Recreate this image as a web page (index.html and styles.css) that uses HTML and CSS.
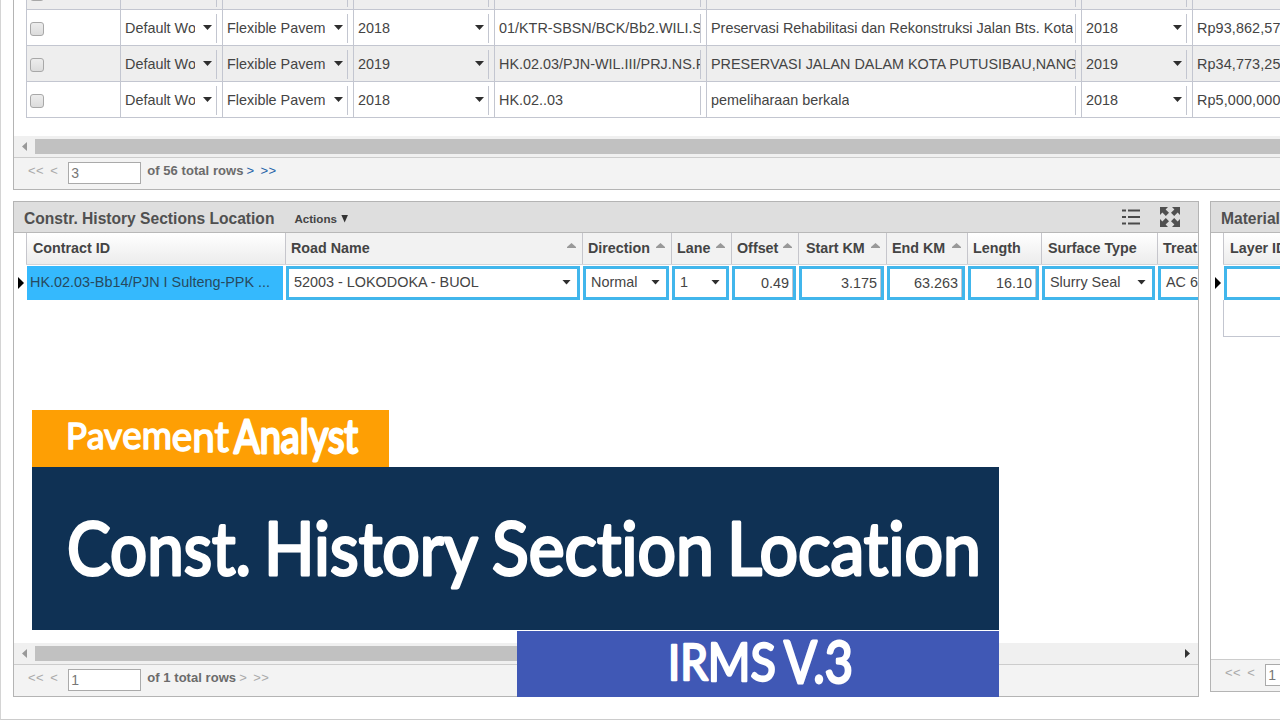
FILE: index.html
```html
<!DOCTYPE html>
<html>
<head>
<meta charset="UTF-8">
<title>Pavement Analyst</title>
<link rel="stylesheet" href="styles.css">
</head>
<body>
<div class="page">

<!-- contracts -->
<div class="panel contracts">
  <div class="grid-body">
    <div class="row alt first">
      <div class="cell"><span class="check"></span></div>
      <div class="cell"><div class="field"></div></div>
      <div class="cell"><div class="field"></div></div>
      <div class="cell"><div class="field"></div></div>
      <div class="cell"><div class="field"></div></div>
      <div class="cell"><div class="field"></div></div>
      <div class="cell"><div class="field"></div></div>
      <div class="cell"></div>
    </div>
    <div class="row">
      <div class="cell"><span class="check"></span></div>
      <div class="cell"><div class="field"><span>Default Wo</span><i class="arrow"></i></div></div>
      <div class="cell"><div class="field"><span>Flexible Pavem</span><i class="arrow"></i></div></div>
      <div class="cell"><div class="field"><span>2018</span><i class="arrow"></i></div></div>
      <div class="cell"><div class="field"><span>01/KTR-SBSN/BCK/Bb2.WILI.S</span></div></div>
      <div class="cell"><div class="field"><span>Preservasi Rehabilitasi dan Rekonstruksi Jalan Bts. Kota</span></div></div>
      <div class="cell"><div class="field"><span>2018</span><i class="arrow"></i></div></div>
      <div class="cell"><div class="field"><span>Rp93,862,570</span></div></div>
    </div>
    <div class="row alt">
      <div class="cell"><span class="check"></span></div>
      <div class="cell"><div class="field"><span>Default Wo</span><i class="arrow"></i></div></div>
      <div class="cell"><div class="field"><span>Flexible Pavem</span><i class="arrow"></i></div></div>
      <div class="cell"><div class="field"><span>2019</span><i class="arrow"></i></div></div>
      <div class="cell"><div class="field"><span>HK.02.03/PJN-WIL.III/PRJ.NS.P</span></div></div>
      <div class="cell"><div class="field"><span>PRESERVASI JALAN DALAM KOTA PUTUSIBAU,NANG</span></div></div>
      <div class="cell"><div class="field"><span>2019</span><i class="arrow"></i></div></div>
      <div class="cell"><div class="field"><span>Rp34,773,254</span></div></div>
    </div>
    <div class="row">
      <div class="cell"><span class="check"></span></div>
      <div class="cell"><div class="field"><span>Default Wo</span><i class="arrow"></i></div></div>
      <div class="cell"><div class="field"><span>Flexible Pavem</span><i class="arrow"></i></div></div>
      <div class="cell"><div class="field"><span>2018</span><i class="arrow"></i></div></div>
      <div class="cell"><div class="field"><span>HK.02..03</span></div></div>
      <div class="cell"><div class="field"><span>pemeliharaan berkala</span></div></div>
      <div class="cell"><div class="field"><span>2018</span><i class="arrow"></i></div></div>
      <div class="cell"><div class="field"><span>Rp5,000,000,</span></div></div>
    </div>
  </div>
  <div class="scrollbar"><i class="sb-left"></i><div class="thumb"></div></div>
  <div class="pager">
    <span class="off">&lt;&lt;</span><span class="off prev">&lt;</span>
    <div class="pagebox">3</div>
    <b>of 56 total rows</b><span class="on">&gt;</span><span class="on last">&gt;&gt;</span>
  </div>
</div>

<div class="lower">

<!-- section locations -->
<div class="panel sections">
  <div class="titlebar">
    <h2>Constr. History Sections Location</h2>
    <span class="actions">Actions <i></i></span>
    <svg class="ico-list" width="18" height="16" viewBox="0 0 18 16">
      <path d="M0 1.500h4M6 1.500h12M0 8h4M6 8h12M0 14.500h4M6 14.500h12" stroke="#4a4a4a" stroke-width="2.200"/>
    </svg>
    <svg class="ico-full" width="20" height="20" viewBox="0 0 20 20" fill="#505050">
      <path id="arr" d="M0 0H8L5.600 2.400L9 5.800L5.800 9L2.400 5.600L0 8Z"/>
      <use href="#arr" transform="matrix(-1 0 0 1 20 0)"/>
      <use href="#arr" transform="matrix(1 0 0 -1 0 20)"/>
      <use href="#arr" transform="matrix(-1 0 0 -1 20 20)"/>
    </svg>
  </div>
  <div class="head cols">
    <div class="th light">Contract ID</div>
    <div class="th">Road Name<i class="sort"></i></div>
    <div class="th">Direction<i class="sort"></i></div>
    <div class="th">Lane<i class="sort"></i></div>
    <div class="th">Offset<i class="sort"></i></div>
    <div class="th wide">Start KM<i class="sort"></i></div>
    <div class="th">End KM<i class="sort"></i></div>
    <div class="th light">Length</div>
    <div class="th light">Surface Type</div>
    <div class="th light">Treat</div>
  </div>
  <div class="data cols">
    <i class="marker"></i>
    <div class="sel">HK.02.03-Bb14/PJN I Sulteng-PPK ...</div>
    <div class="edit"><span>52003 - LOKODOKA - BUOL</span><i class="arrow"></i></div>
    <div class="edit"><span>Normal</span><i class="arrow"></i></div>
    <div class="edit"><span>1</span><i class="arrow"></i></div>
    <div class="edit num"><span>0.49</span></div>
    <div class="edit num"><span>3.175</span></div>
    <div class="edit num"><span>63.263</span></div>
    <div class="edit num"><span>16.10</span></div>
    <div class="edit"><span>Slurry Seal</span><i class="arrow"></i></div>
    <div class="edit"><span>AC 6</span></div>
  </div>
  <div class="fill"></div>
  <div class="scrollbar"><i class="sb-left"></i><div class="thumb part"></div><i class="sb-right"></i></div>
  <div class="pager">
    <span class="off">&lt;&lt;</span><span class="off prev">&lt;</span>
    <div class="pagebox">1</div>
    <b>of 1 total rows</b><span class="off next">&gt;</span><span class="off last">&gt;&gt;</span>
  </div>
</div>

<!-- materials -->
<div class="panel materials">
  <div class="titlebar"><h2>Material</h2></div>
  <div class="head cols"><div class="th light">Layer ID</div></div>
  <div class="data cols"><i class="marker"></i><div class="edit"></div></div>
  <div class="blank"></div>
  <div class="fill"></div>
  <div class="pager">
    <span class="off">&lt;&lt;</span><span class="off prev">&lt;</span>
    <div class="pagebox">1</div>
  </div>
</div>

</div>
</div>

<!-- caption over the grids -->
<div class="caption">
  <svg class="tag" width="357" height="57" viewBox="32 410 357 57">
    <text x="66" y="449" textLength="163" lengthAdjust="spacingAndGlyphs"><tspan font-size="37">P</tspan><tspan font-size="37.500">av</tspan><tspan font-size="39">em</tspan><tspan font-size="41" dy="1.500">e</tspan><tspan font-size="43" dy="1">nt</tspan></text>
    <text class="heavy" x="234" y="453" font-size="47" textLength="124" lengthAdjust="spacingAndGlyphs">Analyst</text>
  </svg>
  <svg class="main" width="967" height="163" viewBox="32 467 967 163">
    <text x="67" y="574.500" textLength="184" lengthAdjust="spacingAndGlyphs">Const.</text>
    <text x="264" y="574.500" textLength="214" lengthAdjust="spacingAndGlyphs">History</text>
    <text x="492" y="574.500" textLength="222" lengthAdjust="spacingAndGlyphs">Section</text>
    <text x="727" y="574.500" textLength="254" lengthAdjust="spacingAndGlyphs">Location</text>
  </svg>
  <svg class="version" width="482" height="66" viewBox="517 631 482 66">
    <text x="668" y="679.500" textLength="108" lengthAdjust="spacingAndGlyphs"><tspan font-size="49">I</tspan><tspan font-size="50">R</tspan><tspan font-size="52" dy="1">M</tspan><tspan font-size="53">S</tspan></text>
    <text class="heavy" x="784" y="682.500" font-size="59" textLength="69" lengthAdjust="spacingAndGlyphs">V.3</text>
  </svg>
</div>
</body>
</html>
```
FILE: styles.css
```css
* {
  box-sizing: border-box;
}

body {
  margin: 0;
  width: 1280px;
  height: 720px;
  overflow: hidden;
  background: #fff;
  font-family: "Liberation Sans", Arial, sans-serif;
  font-size: 14.4px;
  color: #444;
}

.page {
  height: 720px;
  border-left: 1px solid #d4d4d4;
  border-bottom: 1px solid #ccc;
  padding-left: 12px;
  overflow: hidden;
}

.panel {
  display: flex;
  flex-direction: column;
  border: 1px solid #b4b4b4;
  overflow: hidden;
}

.contracts {
  width: 1300px;
  height: 190px;
  border-top: 0;
}

.grid-body {
  flex: none;
  height: 136px;
  padding-left: 12px;
}

.row {
  display: grid;
  grid-template-columns: 94px 102px 131px 141px 212px 375px 111px 140px;
  height: 36px;
  border-bottom: 1px solid #c3c6d0;
}

.row.first {
  height: 10px;
}

.row.alt {
  background: #eee;
}

.cell {
  min-width: 0;
  height: 100%;
  padding: 4px 5px 2px 4px;
  border-left: 1px solid #c3c6d0;
  overflow: hidden;
}

.cell:first-child {
  padding: 12px 0 0 3px;
}

.first .cell {
  padding-top: 0;
}

.first .cell:first-child {
  display: flex;
  align-items: flex-end;
  padding-top: 0;
  padding-bottom: 8px;
}

.check {
  display: block;
  flex: none;
  width: 14px;
  height: 14px;
  border: 1px solid #a8a8a8;
  border-radius: 3px;
  background: linear-gradient(#ededed, #dcdcdc);
}

.field {
  display: flex;
  align-items: center;
  justify-content: space-between;
  height: 100%;
  padding-bottom: 2px;
  padding-right: 4px;
  border-right: 1px solid #c3c6d0;
  overflow: hidden;
  white-space: nowrap;
}

.field span {
  overflow: hidden;
}

.cell:nth-child(2) span {
  width: 70px;
}

.cell:nth-child(5) .field,
.cell:nth-child(6) .field {
  padding-right: 0;
}

.cell:last-child .field {
  letter-spacing: 0.1px;
}

.arrow {
  flex: none;
  width: 9px;
  height: 5px;
  background: #2e2e2e;
  clip-path: polygon(0 0, 100% 0, 50% 100%);
}

.scrollbar {
  display: flex;
  align-items: center;
  flex: none;
  height: 21px;
  background: #f0f0f0;
}

.sb-left {
  width: 5px;
  height: 9px;
  margin: 0 8px 0 8px;
  background: #999;
  clip-path: polygon(100% 0, 100% 100%, 0 50%);
}

.sb-right {
  width: 5px;
  height: 9px;
  margin-left: auto;
  margin-right: 8px;
  background: #333;
  clip-path: polygon(0 0, 100% 50%, 0 100%);
}

.thumb {
  width: 1270px;
  height: 15px;
  background: #c1c1c1;
}

.thumb.part {
  width: 700px;
}

.pager {
  display: flex;
  flex: none;
  height: 32px;
  padding: 4px 0 0 14px;
  border-top: 1px solid #ccc;
  background: #f3f3f3;
  font-size: 13px;
  line-height: 17px;
  color: #6b6b6b;
}

.off {
  color: #aaa;
}

.on {
  color: #2563a8;
}

.off,
.on {
  letter-spacing: 0.5px;
}

.prev {
  margin-left: 6px;
}

.last {
  margin-left: 6px;
}

.pagebox {
  width: 73px;
  height: 22px;
  margin: 0 6px 0 10px;
  padding: 1px 0 0 2px;
  border: 1px solid #aaa;
  background: #fff;
  font-size: 14px;
  line-height: 18px;
  color: #777;
}

.pager b {
  margin-right: 3px;
  letter-spacing: 0.05px;
}

.lower {
  display: flex;
  align-items: flex-start;
  gap: 11px;
  width: 1400px;
  padding-top: 11px;
}

.sections {
  width: 1186px;
  height: 496px;
}

.materials {
  width: 200px;
  height: 491px;
}

.titlebar {
  display: flex;
  align-items: center;
  flex: none;
  height: 31px;
  padding-left: 10px;
  padding-right: 18px;
  border-bottom: 1px solid #b8b8b8;
  background: #dedede;
}

.titlebar h2 {
  margin: 3px 0 0;
  font-size: 15.6px;
  font-weight: bold;
  color: #505050;
  white-space: nowrap;
}

.actions {
  margin: 2px 0 0 20px;
  font-size: 11.6px;
  font-weight: bold;
}

.actions i {
  display: inline-block;
  width: 7px;
  height: 8px;
  margin-left: 1px;
  background: #333;
  clip-path: polygon(0 0, 100% 0, 50% 100%);
}

.ico-list {
  margin-left: auto;
  margin-right: 20px;
}

.cols {
  position: relative;
  display: grid;
  grid-template-columns: 259px 297px 89px 60px 67px 88px 81px 74px 116px 100px;
  flex: none;
  margin-left: 12px;
}

.head {
  height: 32px;
  background: #f2f2f2;
  border-bottom: 1px solid #d4d4d8;
}

.th {
  display: flex;
  justify-content: space-between;
  min-width: 0;
  padding: 7px 6px 0 5px;
  border-left: 1px solid #c6c6cc;
  font-size: 14.3px;
  line-height: 17px;
  font-weight: bold;
  white-space: nowrap;
}

.th.wide {
  padding-left: 7px;
}

.th.light {
  background: linear-gradient(#fff, #ececec);
}

.th.light:first-child,
.th.light:nth-child(9) {
  padding-left: 6px;
}

.sort {
  width: 9px;
  height: 5px;
  margin-top: 3px;
  background: #999;
  clip-path: polygon(50% 0, 100% 80%, 100% 100%, 0 100%, 0 80%);
}

.data {
  height: 35px;
}

.marker {
  position: absolute;
  left: -8px;
  top: 12px;
  width: 6px;
  height: 12px;
  background: #000;
  clip-path: polygon(0 0, 100% 50%, 0 100%);
}

.sel {
  margin: 1px 2px 0 1px;
  padding: 0 0 2px 3px;
  background: #35b9fd;
  color: #27495e;
  line-height: 32px;
  white-space: nowrap;
}

.edit {
  display: flex;
  align-items: center;
  justify-content: space-between;
  min-width: 0;
  margin: 1px 2px 0 1px;
  padding: 0 6px 2px 5px;
  border: 3px solid #41b6ec;
  white-space: nowrap;
}

.edit.num {
  justify-content: flex-end;
  padding-bottom: 0;
  padding-right: 4px;
  box-shadow: inset -1px 0 #c3c6d0;
}

.fill {
  flex: 1;
}

.blank {
  height: 37px;
  margin-left: 12px;
  border-left: 1px solid #c3c6d0;
  border-bottom: 1px solid #c3c6d0;
}

.caption {
  position: absolute;
  left: 32px;
  top: 410px;
  display: flex;
  flex-direction: column;
  width: 967px;
}

.caption svg {
  font-family: Lato, sans-serif;
  font-variant-ligatures: none;
  fill: #fff;
  stroke: #fff;
  stroke-width: 1.6;
  stroke-linejoin: round;
}

.caption .tag {
  background: #fe9f04;
}

.caption .main {
  background: #0f3154;
  font-size: 74px;
  stroke-width: 3;
}

.caption .version {
  align-self: flex-end;
  margin-top: 1px;
  background: #4058b5;
  stroke-width: 2.4;
}

.caption .heavy {
  stroke-width: 2.8;
}
```
